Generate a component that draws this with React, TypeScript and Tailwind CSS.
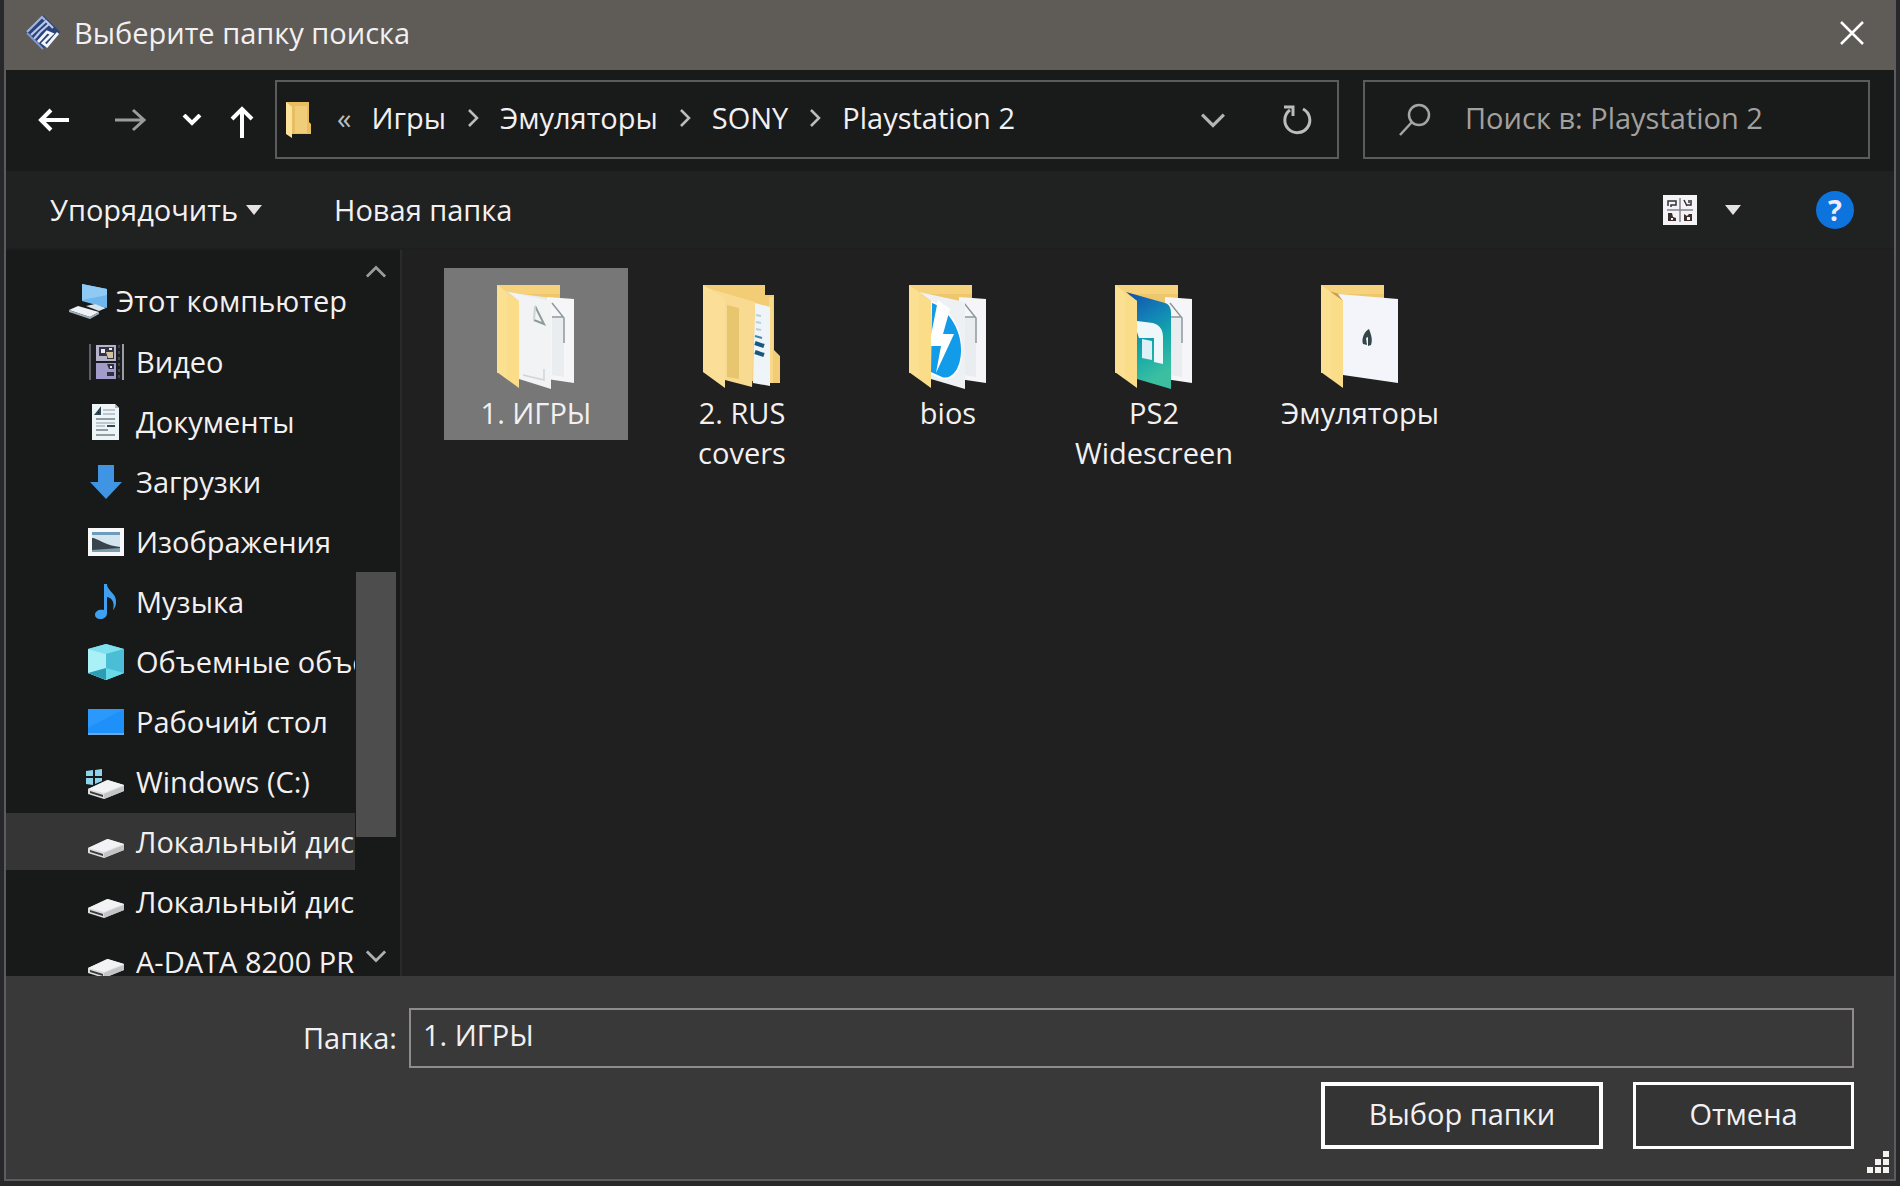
import React from 'react';

type IconProps = { className?: string };

const Logo = () => (
  <svg className="w-9 h-9 shrink-0" viewBox="0 0 36 36" fill="none">
    <path d="M17 0L34 17L17 34L0 17Z" fill="#2c4379" />
    <path d="M1 17L16 2L19 5" stroke="#9fb4e2" strokeWidth="2.2" />
    <path d="M5 20L20 6L23 9M8 24L14 17M14 17L23 9L27 13" stroke="#b9c8ec" strokeWidth="2.2" />
    <path d="M12 27L21 17L26 19L17 28L21 31L32 18" stroke="#f3f5fd" strokeWidth="2.8" />
    <path d="M1 18L17 34" stroke="#7d9ad6" strokeWidth="1.8" />
  </svg>
);

const ComputerIcon = () => (
  <svg className="w-10 h-9 shrink-0" viewBox="0 0 40 36">
    <path d="M14 1L39 6V25L14 18Z" fill="#6fb6ee" />
    <path d="M14 1L39 6V12L14 17Z" fill="#8fcaf5" />
    <path d="M18 23L27 21L38 25L31 28Z" fill="#d5e6f2" />
    <path d="M1 27L10 23L31 29L22 34Z" fill="#eef2f6" />
    <path d="M1 27L22 34L31 29V31L22 36L1 29Z" fill="#9fb0bd" />
  </svg>
);

const VideoIcon = () => (
  <svg className="w-9 h-9 shrink-0" viewBox="0 0 36 36">
    <path d="M1 0H35V36H1Z" fill="#1b1c20" />
    <path d="M2 0V36" stroke="#77777f" strokeWidth="1.5" />
    <path d="M35 0V36" stroke="#9c9ca4" strokeWidth="2" />
    <path d="M31 1V36" stroke="#4e4e56" strokeWidth="1.5" strokeDasharray="3 3" />
    <path d="M8 1H28V17H8Z" fill="#b5b3cc" />
    <path d="M8 19H28V35H8Z" fill="#a39bc9" />
    <path d="M11 3H26V15H19V12H11Z" fill="#33343f" />
    <path d="M19 20H26V25H21ZM19 28H26V32H19Z" fill="#2e2f3f" />
    <path d="M18 8H25V14H20Z" fill="#d3c39c" />
    <path d="M13 5H17V9H13ZM21 4H24V6H21ZM22 22H24V24H22Z" fill="#ece9f7" />
  </svg>
);

const DocumentIcon = () => (
  <svg className="w-9 h-9 shrink-0" viewBox="0 0 36 36">
    <path d="M4 0H27L31 4V36H4Z" fill="#eef5f7" />
    <path d="M27 0V4H31Z" fill="#a9b7c2" />
    <path d="M8 15H27M8 26H20M8 31H27" stroke="#71808a" strokeWidth="1.5" />
    <path d="M8 10L12 5V10ZM19 22H27" stroke="#2f4a56" strokeWidth="2" />
    <path d="M15 6H27M15 10H27M8 19H27M8 22H17" stroke="#8b9aa3" strokeWidth="1" />
  </svg>
);

const DownloadIcon = () => (
  <svg className="w-9 h-9 shrink-0" viewBox="0 0 36 36">
    <path d="M10 1H26V18H34L18 35L2 18H10Z" fill="#3f94e4" />
  </svg>
);

const PictureIcon = () => (
  <svg className="w-9 h-9 shrink-0" viewBox="0 0 36 36">
    <path d="M0 4H36V32H0Z" fill="#f6f8fa" />
    <path d="M4 8H32V28H4Z" fill="#d3e5ee" />
    <path d="M4 8H32V11H4Z" fill="#6d9cba" />
    <path d="M4 14C10 14 15 21 32 23V28H4Z" fill="#38434c" />
    <path d="M4 26L32 24V28H4Z" fill="#7f9dac" />
  </svg>
);

const MusicIcon = () => (
  <svg className="w-9 h-9 shrink-0" viewBox="0 0 36 36">
    <path d="M16 0H19C19 7 29 9 28 19C28 22 26 25 25 26C27 18 24 14 19 13V29C19 33 16 35 12 35C9 35 7 33 7 31C7 27 11 25 16 26Z" fill="#3f9ff0" />
  </svg>
);

const CubeIcon = () => (
  <svg className="w-9 h-9 shrink-0" viewBox="0 0 36 36">
    <path d="M18 0L36 5V29L18 36L0 29V5Z" fill="#5ed0e6" />
    <path d="M18 0L36 5L18 10L0 5Z" fill="#7fe0ee" />
    <path d="M0 5L18 10V36L0 29Z" fill="#a9f1f6" />
    <path d="M18 10L36 5V29L18 36Z" fill="#4bbdd6" />
    <path d="M0 29L18 24V36Z" fill="#2d9db5" />
    <path d="M18 24L36 29L18 36Z" fill="#68dae8" />
  </svg>
);

const DesktopIcon = () => (
  <svg className="w-9 h-9 shrink-0" viewBox="0 0 36 36">
    <path d="M0 5H36V31H0Z" fill="#1e90fa" />
    <path d="M0 5H36L0 24Z" fill="#2b98fb" />
    <path d="M0 29H36V31H0Z" fill="#6fa6dd" />
  </svg>
);

const DriveIcon = () => (
  <svg className="w-9 h-9 shrink-0" viewBox="0 0 36 36">
    <path d="M0 24L19 15L36 20V26L16 34L0 29Z" fill="#dcdcde" />
    <path d="M0 24L20 15L36 20L16 28Z" fill="#f3f2f4" />
    <path d="M2 26L15 30V32L2 28Z" fill="#3a3a3c" />
    <path d="M16 29L36 21V26L16 34Z" fill="#c4c4c7" />
  </svg>
);

const SystemDriveIcon = () => (
  <svg className="w-9 h-9 shrink-0 overflow-visible" viewBox="0 0 36 36">
    <path d="M0 25L19 16L36 21V27L16 35L0 30Z" fill="#dcdcde" />
    <path d="M0 25L20 16L36 21L16 29Z" fill="#f3f2f4" />
    <path d="M2 27L15 31V33L2 29Z" fill="#3a3a3c" />
    <path d="M16 30L36 22V27L16 35Z" fill="#c4c4c7" />
    <path d="M-2 7L5 6V12H-2ZM7 6L14 5V12H7ZM-2 14H5V21L-2 20ZM7 14H14V17L7 20Z" fill="#8ed3ec" />
  </svg>
);

// Open folder with room for whatever sheets stand inside it
const Folder = ({ children }: { children: React.ReactNode }) => (
  <svg className="w-[78px] h-[104px]" viewBox="0 0 78 104">
    <path d="M0 0H63V88H0Z" fill="#eec76c" />
    <path d="M0 0H63V9H0Z" fill="#f5d27b" />
    {children}
    <path d="M0 0L22 16V103L0 87Z" fill="#fbdc89" />
    <path d="M0 0L10 7V94L0 87Z" fill="#fde39b" opacity="0.5" />
  </svg>
);

const BackSheet = () => (
  <>
    <path d="M50 12L77 14V98L50 94Z" fill="#f6f6f8" />
    <path d="M55 33H67V92L55 90Z" fill="#eaedef" />
    <path d="M55 18L67 33V58M55 32H66" stroke="#8d989d" strokeWidth="1.5" fill="none" />
  </>
);

const GamesFolder = () => (
  <Folder>
    <path d="M10 7L54 13V98L22 93V16Z" fill="#e8ebee" />
    <BackSheet />
    <path d="M12 7L54 16V104L22 94V16Z" fill="#f1f3f5" />
    <path d="M37 35L47 39L38 21" stroke="#8f9c96" strokeWidth="2" fill="none" />
    <path d="M37 35L38 21" stroke="#cdd3d2" strokeWidth="2" fill="none" />
    <path d="M26 90L47 95V84" stroke="#cfd6da" strokeWidth="1.5" fill="none" />
  </Folder>
);

const CoversFolder = () => (
  <svg className="w-[78px] h-[104px]" viewBox="0 0 78 104">
    <path d="M0 0H62V10H71V65L77 71V98H60L0 87Z" fill="#f2cd76" />
    <path d="M66 12H70V98H66Z" fill="#f8d98a" />
    <path d="M52 18L67 22V101L50 98Z" fill="#eef4f7" />
    <path d="M53 30L58 31M53 37L58 38M53 44L58 45" stroke="#b9d0dc" strokeWidth="2" />
    <path d="M52 51L59 53" stroke="#3f86ab" strokeWidth="2" />
    <path d="M52 58L61 61M52 67L61 70" stroke="#16587e" strokeWidth="4" />
    <path d="M4 3L52 17L49 102L22 95Z" fill="#f8db90" />
    <path d="M24 20L36 23V94L24 92Z" fill="#e8c670" />
    <path d="M0 0L22 13V103L0 87Z" fill="#fbdf99" />
  </svg>
);

const BiosFolder = () => (
  <Folder>
    <BackSheet />
    <path d="M10 7L56 17V104L22 94V16Z" fill="#eef1f4" />
    <path d="M22 16C36 20 53 38 53 65C53 88 43 96 32 94L22 89Z" fill="#fff" />
    <path d="M23 18C37 23 52 42 52 65C52 87 40 95 33 92L22 87Z" fill="#119be8" />
    <path d="M29 15L41 24L34 49H45L27 88L32 61H22V50Z" fill="#fff" />
  </Folder>
);

const WidescreenFolder = () => (
  <Folder>
    <defs>
      <linearGradient id="cover" x1="0" y1="0" x2="0.3" y2="1">
        <stop offset="0" stopColor="#134da4" />
        <stop offset="0.35" stopColor="#127fb8" />
        <stop offset="0.65" stopColor="#13a8aa" />
        <stop offset="1" stopColor="#3bbfa0" />
      </linearGradient>
    </defs>
    <BackSheet />
    <path d="M11 7L50 18C54 19 56 23 56 28V104L22 94V16Z" fill="url(#cover)" />
    <path d="M22 36L38 38C45 40 48 45 48 52V79L39 77V53H24L22 47Z" fill="#eef8fb" />
    <path d="M27 54L37 56V75L27 73Z" fill="#dcf0f6" />
  </Folder>
);

const EmulatorsFolder = () => (
  <Folder>
    <path d="M8 6L18 9L22 16Z" fill="#c99f48" />
    <path d="M17 9L77 14V98L22 90V16Z" fill="#f3f5fa" />
    <path d="M42 59C40 53 44 46 48 44C50 49 52 55 50 60L47 61V52L45 53L46 60Z" fill="#33474a" />
  </Folder>
);

const ViewIcon = () => (
  <svg className="w-[34px] h-[30px]" viewBox="0 0 34 30">
    <path d="M0 0H34V30H0Z" fill="#f5f3f5" />
    <path d="M17 3V27M4 15H30" stroke="#85848a" strokeWidth="1.5" />
    <path d="M5 11V6H13V10H8V12M21 5L24 11M24 10H28V5M26 5V8" fill="none" stroke="#33323a" strokeWidth="1.5" />
    <path d="M5 18H9L10 22L13 23V26H5ZM21 26V19L24 21L26 19H29V26Z" fill="#3a2f2c" />
    <path d="M8 23H10V25H8ZM24 22H27V25H24Z" fill="#f5f3f5" />
  </svg>
);

const Chevron = ({ className }: IconProps) => (
  <svg className={className} viewBox="0 0 22 14" fill="none" stroke="currentColor" strokeWidth="3">
    <path d="M1 2L11 12L21 2" />
  </svg>
);

const Separator = () => (
  <svg className="w-[14px] h-5 text-[#bdbdbd]" viewBox="0 0 14 20" fill="none" stroke="currentColor" strokeWidth="2.5">
    <path d="M3 2L11 10L3 18" />
  </svg>
);

const Triangle = () => (
  <svg className="w-4 h-[10px]" viewBox="0 0 16 10" fill="#e6e1e4">
    <path d="M0 0H16L8 10Z" />
  </svg>
);

const places = [
  { name: 'Видео', icon: <VideoIcon /> },
  { name: 'Документы', icon: <DocumentIcon /> },
  { name: 'Загрузки', icon: <DownloadIcon /> },
  { name: 'Изображения', icon: <PictureIcon /> },
  { name: 'Музыка', icon: <MusicIcon /> },
  { name: 'Объемные объекты', icon: <CubeIcon /> },
  { name: 'Рабочий стол', icon: <DesktopIcon /> },
  { name: 'Windows (C:)', icon: <SystemDriveIcon /> },
  { name: 'Локальный диск', icon: <DriveIcon />, current: true },
  { name: 'Локальный диск', icon: <DriveIcon /> },
  { name: 'A-DATA 8200 PR', icon: <DriveIcon /> }
];

const folders = [
  { name: '1. ИГРЫ', icon: <GamesFolder />, selected: true },
  { name: '2. RUS covers', icon: <CoversFolder /> },
  { name: 'bios', icon: <BiosFolder /> },
  { name: 'PS2 Widescreen', icon: <WidescreenFolder /> },
  { name: 'Эмуляторы', icon: <EmulatorsFolder /> }
];

const crumbs = ['Игры', 'Эмуляторы', 'SONY', 'Playstation 2'];

const TitleBar = () => (
  <header className="flex items-center justify-between h-[70px] pl-5 pr-7 bg-[#5f5b57]">
    <div className="flex items-center gap-3 pb-1">
      <Logo />
      <h1>Выберите папку поиска</h1>
    </div>
    <button aria-label="Закрыть" className="pb-1">
      <svg className="w-7 h-7" viewBox="0 0 28 28" stroke="#fff" strokeWidth="2.5">
        <path d="M3 3L25 25M25 3L3 25" />
      </svg>
    </button>
  </header>
);

const NavBar = () => (
  <nav className="flex items-start h-[101px] pt-[10px] pr-6 bg-[#191a1a]">
    <div className="flex items-center w-[269px] h-[80px] pl-8 shrink-0">
      <button aria-label="Назад" className="mr-11">
        <svg className="w-8 h-6" viewBox="0 0 32 24" fill="none" stroke="#fff" strokeWidth="4">
          <path d="M31 12H3M13 2L3 12L13 22" />
        </svg>
      </button>
      <button aria-label="Вперед" className="mr-9">
        <svg className="w-8 h-6" viewBox="0 0 32 24" fill="none" stroke="#9b9b9b" strokeWidth="3">
          <path d="M1 12H30M19 2L30 12L19 22" />
        </svg>
      </button>
      <button aria-label="Последние места" className="mr-7">
        <svg className="w-5 h-3" viewBox="0 0 20 12" fill="none" stroke="#fff" strokeWidth="4">
          <path d="M2 1L10 9L18 1" />
        </svg>
      </button>
      <button aria-label="Вверх" className="pt-1">
        <svg className="w-6 h-8" viewBox="0 0 24 32" fill="none" stroke="#fff" strokeWidth="4">
          <path d="M12 32V3M2 13L12 3L22 13" />
        </svg>
      </button>
    </div>
    <div className="flex items-center grow h-[79px] pl-2 pr-6 border-2 border-[#5b5b5b]">
      <svg className="w-7 h-9 mr-6" viewBox="0 0 28 36">
        <path d="M1 0H24V20L26 22V32H1Z" fill="#e8be60" />
        <path d="M10 4H22V31H10Z" fill="#f0cd78" />
        <path d="M1 0L7 5V36L1 32Z" fill="#fde39a" />
      </svg>
      <span className="pb-1 mr-5 text-[#bdbdbd]">«</span>
      <ol className="flex items-center gap-5 pb-1">
        {crumbs.map((crumb, index) => (
          <li key={crumb} className="flex items-center gap-5">
            {index > 0 && <Separator />}
            <a href="#" className="whitespace-nowrap">{crumb}</a>
          </li>
        ))}
      </ol>
      <button aria-label="Предыдущие расположения" className="ml-auto mr-14">
        <Chevron className="w-6 h-4 text-[#b4b4b4]" />
      </button>
      <button aria-label="Обновить">
        <svg className="w-8 h-8" viewBox="0 0 32 32" fill="none" stroke="#bcbcbc" strokeWidth="3">
          <path d="M22 5A12.5 12.5 0 1 1 9 6" />
          <path d="M3 3H12V12" />
        </svg>
      </button>
    </div>
    <label className="flex items-center w-[507px] h-[79px] ml-6 px-8 border-2 border-[#5b5b5b] shrink-0">
      <svg className="w-9 h-9 mr-8 shrink-0" viewBox="0 0 36 36" fill="none" stroke="#a5a5a5" strokeWidth="2.5">
        <circle cx="22" cy="13" r="10" />
        <path d="M15 20L3 33" />
      </svg>
      <input aria-label="Поиск" className="w-full pb-1 bg-transparent outline-none placeholder:text-[#a3a09e]" placeholder="Поиск в: Playstation 2" />
    </label>
  </nav>
);

const Toolbar = () => (
  <div className="flex items-center h-[79px] pl-11 pr-10 bg-[#202121] border-b-2 border-[#1b1f20]">
    <button className="flex items-center gap-2">
      Упорядочить
      <Triangle />
    </button>
    <button className="ml-[72px]">Новая папка</button>
    <button aria-label="Изменить представление" className="flex items-center gap-7 ml-auto">
      <ViewIcon />
      <Triangle />
    </button>
    <button aria-label="Справка" className="flex items-center justify-center w-[38px] h-[38px] ml-[75px] rounded-full bg-[#0c74dc] text-[#f3e9fb] font-bold">
      ?
    </button>
  </div>
);

const Sidebar = () => (
  <aside className="flex w-[396px] shrink-0 bg-[#181919] border-r-2 border-[#272b2d]">
    <ul className="w-[349px] overflow-hidden pt-[22px]">
      <li className="h-[61px]">
        <a href="#" className="flex items-center h-[58px] pl-[62px] gap-2 whitespace-nowrap">
          <ComputerIcon />
          Этот компьютер
        </a>
      </li>
      {places.map((place, index) => (
        <li key={index} className="h-[60px]">
          <a
            href="#"
            className={`flex items-center h-[57px] pl-[82px] gap-3 whitespace-nowrap ${place.current ? 'bg-[#353535]' : ''}`}
          >
            {place.icon}
            {place.name}
          </a>
        </li>
      ))}
    </ul>
    <div className="flex flex-col items-center w-10 ml-px pt-[14px] pb-3">
      <Chevron className="w-5 h-4 text-[#9b9b9b] rotate-180" />
      <div className="w-10 h-[265px] mt-[292px] bg-[#4d4d4d]"></div>
      <Chevron className="w-5 h-4 mt-auto text-[#b0b0b0]" />
    </div>
  </aside>
);

const Files = () => (
  <main className="grow pt-[18px] pl-[42px] bg-[#202020]">
    <ul className="flex flex-wrap items-start gap-[22px]">
      {folders.map((folder) => (
        <li key={folder.name}>
          <button
            className={`flex flex-col items-center w-[184px] px-3 pt-[17px] pb-[7px] leading-10 ${folder.selected ? 'bg-[#777777]' : ''}`}
          >
            {folder.icon}
            <span className="mt-1">{folder.name}</span>
          </button>
        </li>
      ))}
    </ul>
  </main>
);

const Footer = () => (
  <footer className="flex flex-col h-[203px] pt-8 pl-[297px] pr-10 bg-[#3a3939]">
    <div className="flex items-center gap-3">
      <label htmlFor="folder">Папка:</label>
      <input
        id="folder"
        defaultValue="1. ИГРЫ"
        className="grow h-[60px] px-3 pb-2 border-2 border-[#8f8b8f] bg-[#3a3939] outline-none"
      />
    </div>
    <div className="flex justify-end gap-[30px] mt-[14px]">
      <button className="w-[282px] h-[67px] pb-1 border-4 border-white bg-[#343434]">Выбор папки</button>
      <button className="w-[221px] h-[67px] pb-1 border-3 border-white bg-[#343434]">Отмена</button>
    </div>
  </footer>
);

const App = () => {
  return (
    <div className="min-h-screen px-1 bg-[#26282a] font-['Open_Sans','Noto_Sans',sans-serif] text-[29px] leading-9 text-[#f3f0f1]">
      <div className="relative border-x-2 border-b-2 border-[#5e5a5d]">
        <TitleBar />
        <NavBar />
        <Toolbar />
        <div className="flex h-[726px]">
          <Sidebar />
          <Files />
        </div>
        <Footer />
        <svg className="absolute right-1 bottom-1 w-6 h-6" viewBox="0 0 24 24" fill="#f4f3ef">
          <path d="M17 0H23V6H17ZM9 8H15V14H9ZM17 8H23V14H17ZM1 16H7V22H1ZM9 16H15V22H9ZM17 16H23V22H17Z" />
        </svg>
      </div>
    </div>
  );
};

export default App;
